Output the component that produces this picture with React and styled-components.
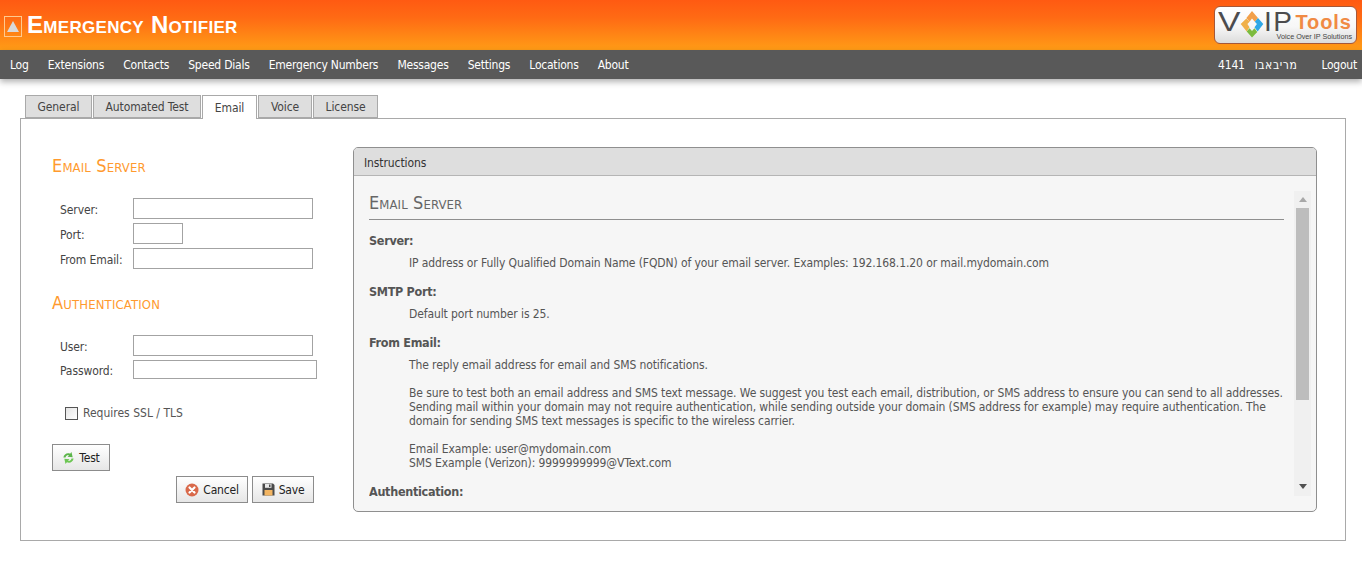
import React from 'react'
import styled, { createGlobalStyle } from 'styled-components'

const GlobalStyle = createGlobalStyle`
  html, body { margin: 0; padding: 0; background: #fff; }
  body {
    font-family: "DejaVu Sans", "Noto Sans", sans-serif;
    font-stretch: condensed;
    font-size: 12px;
    letter-spacing: -0.1px;
    color: #333;
  }
  * { box-sizing: border-box; }
`

const Header = styled.header`
  height: 50px;
  background: linear-gradient(to bottom, #ff5a12 0%, #ff6a14 35%, #ff9c16 100%);
  display: flex;
  align-items: center;
  justify-content: space-between;
  padding: 0 5px 0 4px;
`
const Brand = styled.div`
  display: flex;
  align-items: center;
  gap: 5px;
`
const BrandMark = styled.div`
  width: 18px;
  height: 21px;
  border: 1px solid #ffc98f;
  display: flex;
  align-items: center;
  justify-content: center;
  margin-top: 2px;
`
const BrandTitle = styled.h1`
  margin: 0;
  font-family: "Liberation Sans", Arial, sans-serif;
  font-stretch: normal;
  font-variant: small-caps;
  font-weight: bold;
  font-size: 24px;
  letter-spacing: 0.3px;
  color: #fff;
`
const Logo = styled.div`
  width: 143px;
  height: 38px;
  border-radius: 6px;
  border: 1px solid #a5583a;
  background: linear-gradient(to bottom, #fff 0%, #f7f7f7 55%, #dcdcdc 100%);
  display: flex;
  flex-direction: column;
  padding: 4px 4px 0 3px;
  overflow: hidden;
`
const LogoRow = styled.div`
  display: flex;
  align-items: center;
  height: 22px;
  font-family: "Liberation Sans", Arial, sans-serif;
  font-stretch: normal;
  line-height: 22px;
`
const LogoV = styled.span`
  display: inline-block;
  width: 22px;
  font-size: 28px;
  color: #4c4c4e;
  transform: scaleX(1.2);
  transform-origin: left center;
`
const LogoDark = styled.span`
  font-size: 28px;
  color: #4c4c4e;
  letter-spacing: 1.5px;
`
const LogoTools = styled.span`
  font-size: 20px;
  font-weight: bold;
  color: #f08a44;
  letter-spacing: 0.9px;
  margin-left: 2px;
`
const LogoTag = styled.div`
  font-size: 7.2px;
  font-family: "Liberation Sans", Arial, sans-serif;
  font-stretch: normal;
  letter-spacing: 0;
  color: #444;
  text-align: right;
  line-height: 8px;
`
const Nav = styled.nav`
  height: 29px;
  background: #595959;
  box-shadow: 0 3px 6px rgba(0, 0, 0, 0.3);
  display: flex;
  align-items: center;
  padding: 0 5px 0 10px;
  color: #fff;
  letter-spacing: -0.22px;
`
const NavLink = styled.a`
  margin-right: ${p => p.$gap ?? 19.1}px;
  color: #fff;
  white-space: nowrap;
`
const NavHebrew = styled.bdi`
  margin-left: 10px;
  letter-spacing: 0.6px;
`
const NavRight = styled.div`
  margin-left: auto;
  display: flex;
  align-items: center;
`
const Main = styled.main`
  padding: 16px 16px 0 20px;
`
const TabBar = styled.div`
  display: flex;
  gap: 1px;
  padding-left: 5px;
  height: 24px;
  position: relative;
  z-index: 1;
`
const Tab = styled.div`
  height: ${p => (p.$active ? 24 : 23)}px;
  width: ${p => p.$w}px;
  display: flex;
  align-items: center;
  justify-content: center;
  border: 1px solid #a9a9a9;
  border-bottom: ${p => (p.$active ? 'none' : '1px solid #a9a9a9')};
  background: ${p => (p.$active ? '#fff' : '#dedede')};
  color: #444;
`
const Panel = styled.section`
  height: 423px;
  margin-top: -1px;
  border: 1px solid #a9a9a9;
  display: flex;
  padding: 28px 28px 0 31px;
`
const FormCol = styled.div`
  width: 301px;
  flex: none;
`
const SectionTitle = styled.h2`
  margin: 0;
  font-size: 18px;
  font-weight: normal;
  font-variant: small-caps;
  letter-spacing: 0.15px;
  color: #ff9a2e;
  line-height: 20px;
  height: 20px;
  margin-top: ${p => p.$top || 0}px;
`
const Fields = styled.div`
  display: grid;
  grid-template-columns: 73px auto;
  justify-content: start;
  align-items: center;
  row-gap: 4px;
  padding-left: 8px;
  margin-top: 22px;
  color: #444;
`
const FieldLabel = styled.span`
  padding-top: 2px;
`
const Input = styled.div`
  width: ${p => p.$w || 180}px;
  height: ${p => p.$h || 21}px;
  border: 1px solid #a3a3a3;
  background: #fff;
`
const CheckRow = styled.label`
  display: flex;
  align-items: center;
  gap: 5px;
  margin: 27px 0 0 13px;
  color: #555;
  letter-spacing: 0;
`
const CheckBox = styled.span`
  width: 13px;
  height: 13px;
  border: 1px solid #555;
  background: linear-gradient(135deg, #e4e4e4, #fff);
`
const Button = styled.button`
  height: 27px;
  width: ${p => p.$w}px;
  padding: 0;
  display: inline-flex;
  align-items: center;
  justify-content: center;
  gap: 4px;
  border: 1px solid #8c8c8c;
  background: linear-gradient(to bottom, #fff, #e6e6e6);
  font: inherit;
  letter-spacing: -0.2px;
  color: #222;
`
const TestRow = styled.div`
  margin-top: 24px;
`
const ActionRow = styled.div`
  display: flex;
  justify-content: flex-end;
  gap: 4px;
  margin-top: 5px;
  width: 262px;
`
const Instructions = styled.div`
  width: 965px;
  height: 365px;
  border: 1px solid #8f8f8f;
  border-radius: 5px;
  background: #f6f6f6;
  overflow: hidden;
  display: flex;
  flex-direction: column;
`
const InstructionsHead = styled.div`
  height: 28px;
  flex: none;
  display: flex;
  align-items: center;
  padding: 2px 0 0 10px;
  background: #dedede;
  border-bottom: 1px solid #b5b5b5;
  color: #333;
`
const InstructionsBody = styled.div`
  flex: 1;
  min-height: 0;
  display: flex;
  padding: 15px 5px 15px 15px;
`
const Scroller = styled.div`
  width: 915px;
  height: 305px;
  overflow: hidden;
  color: #555;
`
const DocTitle = styled.h3`
  margin: 0 0 11px;
  font-size: 18px;
  font-weight: normal;
  font-variant: small-caps;
  letter-spacing: 0.1px;
  color: #666;
  line-height: 24px;
  height: 29px;
  border-bottom: 1px solid #8f8f8f;
`
const Term = styled.h4`
  margin: 0;
  font-size: 12.5px;
  letter-spacing: -0.3px;
  line-height: 20px;
  font-weight: bold;
  color: #555;
`
const Desc = styled.div`
  margin: 5px 0 12px 40px;
  line-height: 14px;
`
const Para = styled.p`
  margin: 0 0 14px;
  line-height: 14px;
`
const Rail = styled.div`
  width: 17px;
  margin-left: 10px;
  background: #f0f0f0;
  display: flex;
  flex-direction: column;
  align-items: center;
  height: 305px;
`
const RailArrow = styled.div`
  height: 17px;
  flex: none;
  display: flex;
  align-items: center;
  justify-content: center;
  margin-bottom: ${p => p.$bottom || 0}px;
`
const RailTrack = styled.div`
  flex: 1;
  width: 100%;
  padding: 0 2px;
`
const RailThumb = styled.div`
  height: 192px;
  background: #bdbdbd;
`

const RefreshIcon = () => (
  <svg width="13" height="14" viewBox="0 0 14 14">
    <path d="M1.500 6.500C2 3 5.500 1 8.700 2.400L10.200.500l1.300 5.600-5.500-.4 1.500-1.800C5.800 3.400 4.200 4.500 3.800 6.500z" fill="#5cb54a" />
    <path d="M12.500 7.500C12 11 8.500 13 5.300 11.600L3.800 13.500 2.500 7.900l5.500.4-1.500 1.800c1.700.5 3.300-.6 3.700-2.600z" fill="#6cc653" />
  </svg>
)
const CancelIcon = () => (
  <svg width="14" height="14" viewBox="0 0 14 14">
    <circle cx="7" cy="7" r="6.500" fill="#d9694a" />
    <path d="M4.500 4.500l5 5M9.500 4.500l-5 5" stroke="#fff" strokeWidth="2.200" strokeLinecap="round" />
  </svg>
)
const SaveIcon = () => (
  <svg width="13" height="13" viewBox="0 0 13 13">
    <path d="M0.500 0.500H11L12.500 2V12.500H0.500z" fill="#4a4a4a" />
    <rect x="3" y="1" width="6.500" height="3.800" fill="#e8e8e8" />
    <rect x="7" y="1.500" width="1.500" height="2.500" fill="#4a4a4a" />
    <rect x="2.500" y="7" width="8" height="5.500" fill="#f3b562" />
  </svg>
)
const Diamond = () => (
  <svg width="24" height="28" viewBox="0 0 34 26" preserveAspectRatio="none" style={{ flex: 'none', marginTop: 3 }}>
    <path d="M17 1l8.500 6.500-4.500 3.500L17 8l-3.500 3-4.500-3.500z" fill="#f2a04a" />
    <path d="M25.500 7.500L33 13l-8 7-4.500-4 3.500-3-3-2z" fill="#2fa8e6" />
    <path d="M9 8l4.500 3-3 2 3 3-4 4L1 13z" fill="#f0b04a" />
    <path d="M13.500 17l3.500 2.500 3.500-2.500 4 3.500L17 25.500 9.500 20z" fill="#7cbb3f" />
  </svg>
)

const navItems = [
  'Log', 'Extensions', 'Contacts', 'Speed Dials', 'Emergency Numbers',
  'Messages', 'Settings', 'Locations', 'About',
]
const tabs = [
  ['General', 67], ['Automated Test', 108], ['Email', 55], ['Voice', 54], ['License', 65],
]

export default function App() {
  return (
    <>
      <GlobalStyle />
      <Header>
        <Brand>
          <BrandMark>
            <svg width="12" height="11" viewBox="0 0 12 11"><path d="M6 0l6 11H0z" fill="#d9d9d9" /></svg>
          </BrandMark>
          <BrandTitle>Emergency Notifier</BrandTitle>
        </Brand>
        <Logo>
          <LogoRow>
            <LogoV>V</LogoV>
            <Diamond />
            <LogoDark>IP</LogoDark>
            <LogoTools>Tools</LogoTools>
          </LogoRow>
          <LogoTag>Voice Over IP Solutions</LogoTag>
        </Logo>
      </Header>
      <Nav>
        {navItems.map(label => <NavLink key={label}>{label}</NavLink>)}
        <NavRight>
          <NavLink $gap={24}>4141<NavHebrew>מריבאבו</NavHebrew></NavLink>
          <NavLink $gap={0}>Logout</NavLink>
        </NavRight>
      </Nav>
      <Main>
        <TabBar>
          {tabs.map(([t, w]) => <Tab key={t} $w={w} $active={t === 'Email'}>{t}</Tab>)}
        </TabBar>
        <Panel>
          <FormCol>
            <SectionTitle $top={9}>Email Server</SectionTitle>
            <Fields>
              <FieldLabel>Server:</FieldLabel><Input />
              <FieldLabel>Port:</FieldLabel><Input $w={50} />
              <FieldLabel>From Email:</FieldLabel><Input />
            </Fields>
            <SectionTitle $top={24}>Authentication</SectionTitle>
            <Fields>
              <FieldLabel>User:</FieldLabel><Input />
              <FieldLabel>Password:</FieldLabel><Input $w={184} $h={19} />
            </Fields>
            <CheckRow><CheckBox />Requires SSL / TLS</CheckRow>
            <TestRow>
              <Button $w={58}><RefreshIcon />Test</Button>
            </TestRow>
            <ActionRow>
              <Button $w={72}><CancelIcon />Cancel</Button>
              <Button $w={62}><SaveIcon />Save</Button>
            </ActionRow>
          </FormCol>
          <Instructions>
            <InstructionsHead>Instructions</InstructionsHead>
            <InstructionsBody>
              <Scroller>
                <DocTitle>Email Server</DocTitle>
                <Term>Server:</Term>
                <Desc>IP address or Fully Qualified Domain Name (FQDN) of your email server. Examples: 192.168.1.20 or mail.mydomain.com</Desc>
                <Term>SMTP Port:</Term>
                <Desc>Default port number is 25.</Desc>
                <Term>From Email:</Term>
                <Desc>
                  <Para>The reply email address for email and SMS notifications.</Para>
                  <Para>Be sure to test both an email address and SMS text message. We suggest you test each email, distribution, or SMS address to ensure you can send to all addresses. Sending mail within your domain may not require authentication, while sending outside your domain (SMS address for example) may require authentication. The domain for sending SMS text messages is specific to the wireless carrier.</Para>
                  <div>Email Example: user@mydomain.com</div>
                  <div>SMS Example (Verizon): 9999999999@VText.com</div>
                </Desc>
                <Term>Authentication:</Term>
              </Scroller>
              <Rail>
                <RailArrow><svg width="8" height="5" viewBox="0 0 8 5"><path d="M4 0l4 5H0z" fill="#a8a8a8" /></svg></RailArrow>
                <RailTrack><RailThumb /></RailTrack>
                <RailArrow $bottom={1}><svg width="8" height="5" viewBox="0 0 8 5"><path d="M0 0h8L4 5z" fill="#505050" /></svg></RailArrow>
              </Rail>
            </InstructionsBody>
          </Instructions>
        </Panel>
      </Main>
    </>
  )
}
